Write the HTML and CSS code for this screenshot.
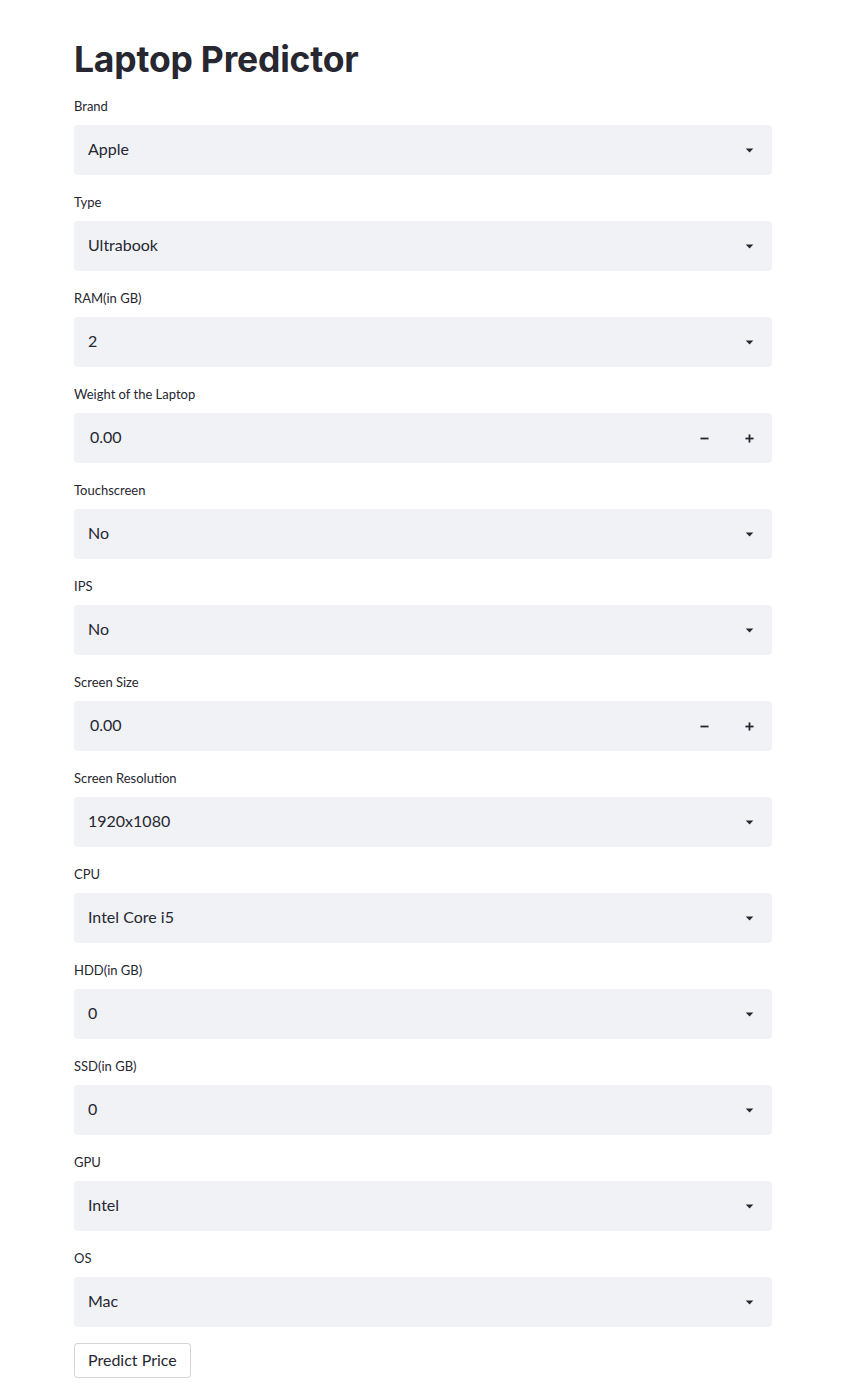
FILE: index.html
```html
<!DOCTYPE html>
<html>
<head>
<meta charset="utf-8">
<link rel="stylesheet" href="styles.css">
</head>
<body>
<main class="page">
  <h1 class="title">Laptop Predictor</h1>

  <div class="field">
    <div class="label">Brand</div>
    <div class="select"><span class="value">Apple</span><svg class="caret" viewBox="0 0 10 6"><path d="M0.5 0.5h9L5 5.5z"/></svg></div>
  </div>
  <div class="field">
    <div class="label">Type</div>
    <div class="select"><span class="value">Ultrabook</span><svg class="caret" viewBox="0 0 10 6"><path d="M0.5 0.5h9L5 5.5z"/></svg></div>
  </div>
  <div class="field">
    <div class="label">RAM(in GB)</div>
    <div class="select"><span class="value">2</span><svg class="caret" viewBox="0 0 10 6"><path d="M0.5 0.5h9L5 5.5z"/></svg></div>
  </div>
  <div class="field">
    <div class="label">Weight of the Laptop</div>
    <div class="number">
      <span class="num-value">0.00</span>
      <div class="steps">
        <span class="step"><svg viewBox="0 0 10 10"><rect x="0.5" y="4" width="9" height="2"/></svg></span>
        <span class="step"><svg viewBox="0 0 10 10"><rect x="0.5" y="4" width="9" height="2"/><rect x="4" y="0.5" width="2" height="9"/></svg></span>
      </div>
    </div>
  </div>
  <div class="field">
    <div class="label">Touchscreen</div>
    <div class="select"><span class="value">No</span><svg class="caret" viewBox="0 0 10 6"><path d="M0.5 0.5h9L5 5.5z"/></svg></div>
  </div>
  <div class="field">
    <div class="label">IPS</div>
    <div class="select"><span class="value">No</span><svg class="caret" viewBox="0 0 10 6"><path d="M0.5 0.5h9L5 5.5z"/></svg></div>
  </div>
  <div class="field">
    <div class="label">Screen Size</div>
    <div class="number">
      <span class="num-value">0.00</span>
      <div class="steps">
        <span class="step"><svg viewBox="0 0 10 10"><rect x="0.5" y="4" width="9" height="2"/></svg></span>
        <span class="step"><svg viewBox="0 0 10 10"><rect x="0.5" y="4" width="9" height="2"/><rect x="4" y="0.5" width="2" height="9"/></svg></span>
      </div>
    </div>
  </div>
  <div class="field">
    <div class="label">Screen Resolution</div>
    <div class="select"><span class="value">1920x1080</span><svg class="caret" viewBox="0 0 10 6"><path d="M0.5 0.5h9L5 5.5z"/></svg></div>
  </div>
  <div class="field">
    <div class="label">CPU</div>
    <div class="select"><span class="value">Intel Core i5</span><svg class="caret" viewBox="0 0 10 6"><path d="M0.5 0.5h9L5 5.5z"/></svg></div>
  </div>
  <div class="field">
    <div class="label">HDD(in GB)</div>
    <div class="select"><span class="value">0</span><svg class="caret" viewBox="0 0 10 6"><path d="M0.5 0.5h9L5 5.5z"/></svg></div>
  </div>
  <div class="field">
    <div class="label">SSD(in GB)</div>
    <div class="select"><span class="value">0</span><svg class="caret" viewBox="0 0 10 6"><path d="M0.5 0.5h9L5 5.5z"/></svg></div>
  </div>
  <div class="field">
    <div class="label">GPU</div>
    <div class="select"><span class="value">Intel</span><svg class="caret" viewBox="0 0 10 6"><path d="M0.5 0.5h9L5 5.5z"/></svg></div>
  </div>
  <div class="field last">
    <div class="label">OS</div>
    <div class="select"><span class="value">Mac</span><svg class="caret" viewBox="0 0 10 6"><path d="M0.5 0.5h9L5 5.5z"/></svg></div>
  </div>

  <button class="predict">Predict Price</button>
</main>
</body>
</html>
```

FILE: styles.css
```css
html, body {
  margin: 0;
  padding: 0;
  background: #ffffff;
}

body {
  font-family: Lato, "Liberation Sans", sans-serif;
  color: #262730;
}

.page {
  width: 698px;
  margin-left: 74px;
  padding-top: 36px;
}

.title {
  margin: 0 0 12px 0;
  font-family: Inter, "Liberation Sans", sans-serif;
  font-weight: 700;
  font-size: 35.5px;
  line-height: 48px;
  letter-spacing: -0.2px;
  color: #262730;
}

.field {
  margin-bottom: 17px;
}

.field.last {
  margin-bottom: 16px;
}

.label {
  font-size: 13px;
  line-height: 20px;
  height: 20px;
  margin-bottom: 9px;
  color: #262730;
}

.select {
  height: 50px;
  box-sizing: border-box;
  background: #f0f2f6;
  border-radius: 4px;
  display: flex;
  align-items: center;
  justify-content: space-between;
  padding: 0 18px 0 14px;
}

.value, .num-value {
  font-size: 16px;
  color: #262730;
}

.value {
  padding-bottom: 3px;
}

.caret {
  width: 9px;
  height: 5px;
  fill: #262730;
}

.number {
  height: 50px;
  display: flex;
  align-items: stretch;
}

.num-value {
  flex: 1;
  display: flex;
  align-items: center;
  padding-left: 16px;
  padding-bottom: 3px;
  background: #f0f2f6;
  border-radius: 4px 0 0 4px;
}

.steps {
  width: 90px;
  display: flex;
  background: #f0f2f6;
  border-radius: 0 4px 4px 0;
}

.step {
  flex: 1;
  display: flex;
  align-items: center;
  justify-content: center;
}

.step svg {
  width: 9px;
  height: 9px;
  fill: #262730;
}

.predict {
  font-family: Lato, "Liberation Sans", sans-serif;
  font-size: 16px;
  color: #262730;
  background: #ffffff;
  border: 1px solid rgba(49, 51, 63, 0.2);
  border-radius: 4px;
  height: 35px;
  padding: 0 13px 2px 13px;
  margin-left: 0;
  cursor: pointer;
}
```
